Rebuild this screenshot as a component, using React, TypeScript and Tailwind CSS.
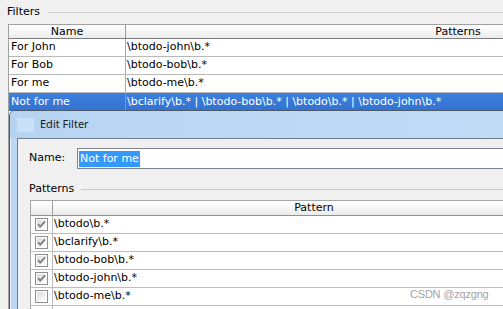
import React from "react";

const filters = [
  { name: "For John", pattern: "\\btodo-john\\b.*" },
  { name: "For Bob", pattern: "\\btodo-bob\\b.*" },
  { name: "For me", pattern: "\\btodo-me\\b.*" },
  {
    name: "Not for me",
    pattern: "\\bclarify\\b.* | \\btodo-bob\\b.* | \\btodo\\b.* | \\btodo-john\\b.*",
    selected: true,
  },
];

const patterns = [
  { text: "\\btodo\\b.*", checked: true },
  { text: "\\bclarify\\b.*", checked: true },
  { text: "\\btodo-bob\\b.*", checked: true },
  { text: "\\btodo-john\\b.*", checked: true },
  { text: "\\btodo-me\\b.*", checked: false },
];

function CheckBox({ checked }: { checked: boolean }) {
  return (
    <svg width="13" height="13" viewBox="0 0 13 13">
      <defs>
        <linearGradient id="cbg" x1="0" y1="0" x2="1" y2="1">
          <stop offset="0" stopColor="#dcdcdc" />
          <stop offset="1" stopColor="#ffffff" />
        </linearGradient>
      </defs>
      <rect x="0.5" y="0.5" width="12" height="12" fill="#ffffff" stroke="#8f8f8f" />
      <rect x="2" y="2" width="9" height="9" fill="url(#cbg)" />
      {checked && (
        <path d="M3 6.2 L5.2 8.6 L10 3.4" fill="none" stroke="#7d7d7d" strokeWidth="1.8" />
      )}
    </svg>
  );
}

function EditFilter() {
  return (
    <div className="absolute left-[9px] top-[110px] w-[620px] h-[230px] rounded-tl-[6px] border border-[#4b5866] bg-gradient-to-r from-[#bcd7f3] to-[#cde2f8] shadow-[inset_1px_1px_0_#eaf3fc] flex flex-col">
      <div className="h-[27px] flex items-center shrink-0 rounded-tl-[5px] bg-gradient-to-r from-[#b6d3f2] via-[#bcd9f6] to-[#c4ddf6]">
        <div className="ml-[6px] w-[19px] h-[16px] bg-[#c8e0f8] border border-[#b9d4ef]" />
        <span className="ml-[5px] text-[11px] text-[#1a1a1a] font-['Noto_Sans',sans-serif]">Edit Filter</span>
      </div>
      <div className="flex-1 ml-[7px] border-t border-l border-[#6f7f90] bg-[#f0f0f0] pl-[11px] pt-[9px]">
        <div className="flex items-stretch h-[21px]">
          <span className="w-[48px] flex items-center">Name:</span>
          <div className="flex-1 border border-[#7f8590] bg-white flex items-center pl-[1px]">
            <span className="bg-[#3399ff] text-white leading-[16px] px-[1px]">Not for me</span>
          </div>
        </div>
        <div className="flex items-center h-[14px] mt-[13px]">
          <span>Patterns</span>
          <div className="flex-1 h-px bg-[#c8c8c8] ml-[7px]" />
        </div>
        <div className="mt-[4px] ml-[1px] w-[600px] border-t border-l border-[#a5a5a5] bg-white">
          <div className="flex h-[15px] border-b border-[#8e8f8f] bg-gradient-to-b from-white to-[#ebebeb]">
            <div className="w-[22px] border-r border-[#a0a0a0]" />
            <div className="w-[522px] text-center leading-[14px]">Pattern</div>
          </div>
          {patterns.map((p, i) => (
            <div key={i} className="flex h-[18px] border-b border-[#bdbdbd]">
              <div className="w-[22px] border-r border-[#bdbdbd] flex items-center pl-[4px]">
                <CheckBox checked={p.checked} />
              </div>
              <div className="flex-1 flex items-center pl-[1px]">{p.text}</div>
            </div>
          ))}
          <div className="flex h-[18px]">
            <div className="w-[22px] border-r border-[#bdbdbd]" />
          </div>
        </div>
      </div>
    </div>
  );
}

export default function App() {
  return (
    <div className="relative w-[503px] h-[309px] overflow-hidden bg-[#f0f0f0] text-black text-[11px] font-['DejaVu_Sans',sans-serif]">
      <div className="h-[24px] flex items-center pl-[7px]">
        <span>Filters</span>
        <div className="flex-1 h-px bg-[#d0d0d0] ml-[8px]" />
      </div>
      <div className="ml-[8px] w-[790px] border-t border-l border-[#a0a0a0] bg-white">
        <div className="flex h-[14px] border-b border-[#7e7f80] bg-gradient-to-b from-white to-[#ebebeb]">
          <div className="w-[117px] border-r border-[#9a9a9a] text-center leading-[13px]">Name</div>
          <div className="w-[664px] text-center leading-[13px]">Patterns</div>
        </div>
        {filters.map((f, i) => (
          <div
            key={i}
            className={
              f.selected
                ? "flex h-[18px] bg-gradient-to-b from-[#3d7fdc] to-[#3272d2] text-white"
                : "flex h-[18px] border-b border-[#b9b9b9]"
            }
          >
            <div
              className={
                f.selected
                  ? "w-[117px] border-r border-[#6f9be0] flex items-center pl-[2px]"
                  : "w-[117px] border-r border-[#a8a8a8] flex items-center pl-[2px]"
              }
            >
              {f.name}
            </div>
            <div className="flex-1 flex items-center pl-[1px] whitespace-pre">{f.pattern}</div>
          </div>
        ))}
        <div className="h-[220px]" />
      </div>
      <EditFilter />
      <div className="absolute left-[410px] top-[286px] text-[11px] text-[#a3a3a3] font-['Liberation_Sans',sans-serif] tracking-[-0.2px]">
        CSDN @zqzgng
      </div>
    </div>
  );
}
